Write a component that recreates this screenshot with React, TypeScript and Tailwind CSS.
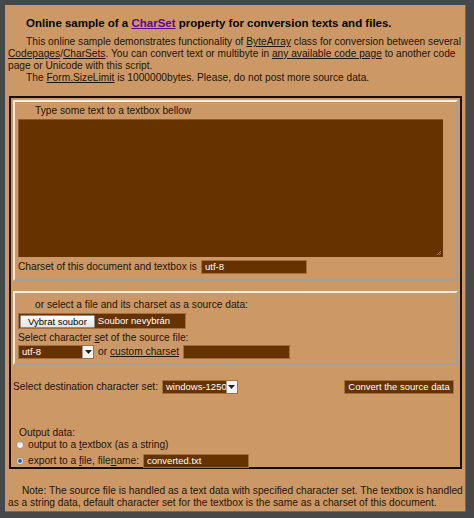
const font = "font-['Liberation_Sans',Arial,sans-serif]"

function Field({ value, w, className = "" }: { value?: string; w: string; className?: string }) {
  return (
    <span
      className={`inline-block h-[14px] ${w} bg-[#663300] border border-[#a0703f] text-white text-[9.5px] leading-[12px] pl-[3px] align-middle ${className}`}
    >
      {value}
    </span>
  )
}

function Select({ value, w }: { value: string; w: string }) {
  return (
    <span className={`inline-flex items-stretch h-[14px] ${w} bg-[#663300] border border-[#a0703f] align-middle`}>
      <span className="flex-1 text-white text-[9.5px] leading-[12px] pl-[3px] whitespace-nowrap overflow-hidden">{value}</span>
      <span className="w-[11px] bg-[#f4f4f4] border-l border-[#a0a0a0] flex items-center justify-center">
        <svg width="7" height="4" viewBox="0 0 7 4">
          <path d="M0 0h7L3.5 4z" fill="#222" />
        </svg>
      </span>
    </span>
  )
}

function Radio({ checked }: { checked?: boolean }) {
  return (
    <span className="inline-flex items-center justify-center w-[8px] h-[8px] rounded-full bg-gradient-to-br from-[#d8d8d8] to-white border border-[#9a9a9a] align-middle mr-[4px]">
      {checked && <span className="w-[4px] h-[4px] rounded-full bg-[#2a5fa8]" />}
    </span>
  )
}

export default function App() {
  return (
    <div className={`min-h-screen bg-[#47484a] pt-[5px] pl-[5px] ${font} text-[10.2px] leading-[12px] text-[#1e1409]`}>
      <div className="w-[461px] h-[507px] bg-[#cc9966] border-r border-b border-[#6a6a6a] flex flex-col">
        <h1 className="mt-[11px] pl-[21px] text-[11.5px] leading-[14px] font-bold text-black">
          Online sample of a <span className="underline text-[#660099]">CharSet</span> property for conversion texts and files.
        </h1>

        <div className="mt-[6px] pl-[3px] pr-[3px]">
          <p className="indent-[18px]">
            This online sample demonstrates functionality of <span className="underline">ByteArray</span> class for
            conversion between several <span className="underline">Codepages</span>/<span className="underline">CharSets</span>. You
            can convert text or multibyte in <span className="underline">any available code page</span> to another code page or
            Unicode with this script.
          </p>
          <p className="indent-[18px]">
            The <span className="underline">Form.SizeLimit</span> is 1000000bytes. Please, do not post more source data.
          </p>
        </div>

        <div className="mt-[12px] ml-[4px] w-[453px] h-[373px] border-2 border-[#1a0c00] p-[2px] flex flex-col">
          <div className="border-2 border-t-[#fbeedd] border-l-[#fbeedd] border-r-[#a89f94] border-b-[#a89f94] pl-[3px] pt-[3px] pb-[5px]">
            <div className="pl-[17px]">Type some text to a textbox bellow</div>
            <div className="relative mt-[2px] w-[425px] h-[138px] bg-[#663300] border-t border-l border-[#8a5a2a]">
              <svg className="absolute right-[1px] bottom-[1px]" width="6" height="6" viewBox="0 0 6 6">
                <path d="M5 1L1 5M5 3L3 5" stroke="#b08860" strokeWidth="0.8" />
              </svg>
            </div>
            <div className="mt-[3px] flex items-center gap-[4px]">
              <span>Charset of this document and textbox is</span>
              <Field value="utf-8" w="w-[106px]" />
            </div>
          </div>

          <div className="mt-[10px] border-2 border-t-[#fbeedd] border-l-[#fbeedd] border-r-[#a89f94] border-b-[#a89f94] pl-[3px] pt-[6px] pb-[4px]">
            <div className="pl-[17px]">or select a file and its charset as a source data:</div>
            <div className="mt-[2px] inline-flex items-center h-[16px] w-[168px] bg-[#663300] border border-[#a0703f] pl-[1px]">
              <span className="h-[13px] px-[7px] bg-gradient-to-b from-white to-[#e4e4e4] border border-[#8f8f8f] rounded-[1px] text-[9.5px] leading-[11px] text-black">
                Vybrat soubor
              </span>
              <span className="ml-[3px] text-[9.5px] text-white">Soubor nevybrán</span>
            </div>
            <div className="mt-[3px]">
              Select character <span className="underline">s</span>et of the source file:
            </div>
            <div className="mt-[1px] flex items-center gap-[4px]">
              <Select value="utf-8" w="w-[76px]" />
              <span>
                or <span className="underline">custom charset</span>
              </span>
              <Field w="w-[107px]" />
            </div>
          </div>

          <div className="mt-[15px] flex items-center justify-between pr-[4px]">
            <div className="flex items-center gap-[4px]">
              <span>Select destination character set:</span>
              <Select value="windows-1250" w="w-[76px]" />
            </div>
            <span className="h-[14px] w-[110px] bg-[#663300] border border-[#a0703f] text-white text-[9.5px] leading-[12px] text-center">
              Convert the source data
            </span>
          </div>

          <div className="mt-[33px] pl-[6px]">Output data:</div>
          <div className="pl-[3px] flex items-center">
            <Radio />
            <span>
              output to a <span className="underline">t</span>extbox (as a string)
            </span>
          </div>
          <div className="mt-[3px] pl-[3px] flex items-center">
            <Radio checked />
            <span>
              export to a <span className="underline">f</span>ile, file<span className="underline">n</span>ame:
            </span>
            <Field value="converted.txt" w="w-[106px]" className="ml-[4px]" />
          </div>
        </div>

        <p className="mt-[16px] pl-[3px] indent-[14px]">
          Note: The source file is handled as a text data with specified character set. The textbox is handled as a string
          data, default character set for the textbox is the same as a charset of this document.
        </p>
      </div>
    </div>
  )
}
